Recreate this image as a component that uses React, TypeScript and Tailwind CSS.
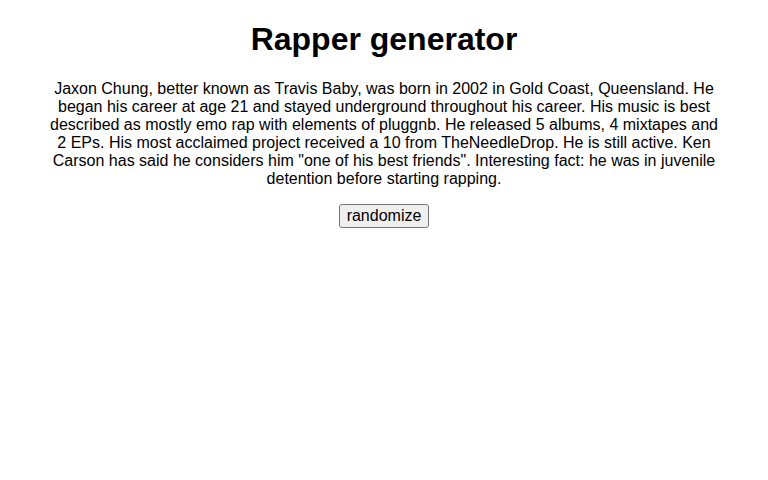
import { useState } from "react";

const BIO =
  'Jaxon Chung, better known as Travis Baby, was born in 2002 in Gold Coast, Queensland. He began his career at age 21 and stayed underground throughout his career. His music is best described as mostly emo rap with elements of pluggnb. He released 5 albums, 4 mixtapes and 2 EPs. His most acclaimed project received a 10 from TheNeedleDrop. He is still active. Ken Carson has said he considers him "one of his best friends". Interesting fact: he was in juvenile detention before starting rapping.';

export default function App() {
  const [bio, setBio] = useState(BIO);

  return (
    <div className="min-h-screen bg-white px-2 text-center text-black [font-family:'Liberation_Sans',Arial,sans-serif]">
      <h1 className="pt-[21px] pb-[22px] text-[32px] font-bold leading-[37px]">Rapper generator</h1>
      <p className="mx-auto max-w-[676px] text-base leading-[18px]">{bio}</p>
      <button
        type="button"
        onClick={() => setBio(BIO)}
        className="mt-4 rounded-[3px] border border-[#767676] bg-[#efefef] px-[7px] py-[2px] text-base leading-[18px] text-black hover:bg-[#e5e5e5]"
      >
        randomize
      </button>
    </div>
  );
}
